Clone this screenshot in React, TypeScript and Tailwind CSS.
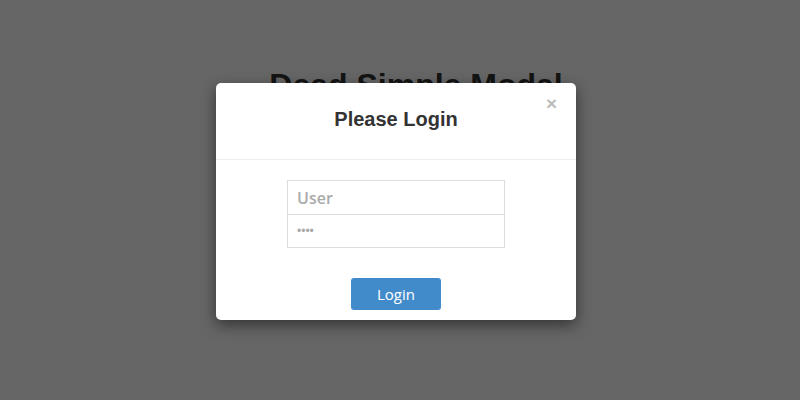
import React from 'react';

const App: React.FC = () => {
  return (
    <div className="relative h-[400px] w-[800px] overflow-hidden bg-white font-['Liberation_Sans',Arial,sans-serif]">
      {/* Page behind the overlay */}
      <div className="pt-[65px] pl-[32px] text-center">
        <h1 className="text-[32px] font-bold leading-[40px] text-[#333]">Dead Simple Modal</h1>
      </div>

      {/* Overlay */}
      <div className="absolute inset-0 flex items-start justify-center bg-black/60 pt-[83px] pr-[8px]">
        <div className="relative w-[360px] rounded-[5px] bg-white shadow-[0_5px_15px_rgba(0,0,0,0.5)]">
          <button className="absolute right-[19px] top-[11px] text-[19px] leading-none font-bold text-[#bbb]">
            ×
          </button>

          {/* Header */}
          <div className="flex h-[77px] items-center justify-center border-b border-[#eee] pb-[4px]">
            <h2 className="text-[20px] font-bold text-[#333]">Please Login</h2>
          </div>

          {/* Body */}
          <div className="flex flex-col items-center pt-[20px] pb-[10px]">
            <input
              type="text"
              placeholder="User"
              className="h-[35px] w-[218px] border border-[#ddd] px-[9px] font-['Open_Sans',sans-serif] text-[16px] font-semibold text-[#555] placeholder:text-[#aaa] outline-none"
            />
            <input
              type="password"
              defaultValue="1234"
              className="-mt-px h-[34px] w-[218px] border border-[#ddd] px-[9px] text-[12px] text-[#aaa] outline-none"
            />
            <button className="mt-[30px] h-[32px] w-[90px] rounded-[3px] bg-[#428bca] font-['Open_Sans',sans-serif] text-[15px] font-medium text-white">
              Login
            </button>
          </div>
        </div>
      </div>
    </div>
  );
};

export default App;
